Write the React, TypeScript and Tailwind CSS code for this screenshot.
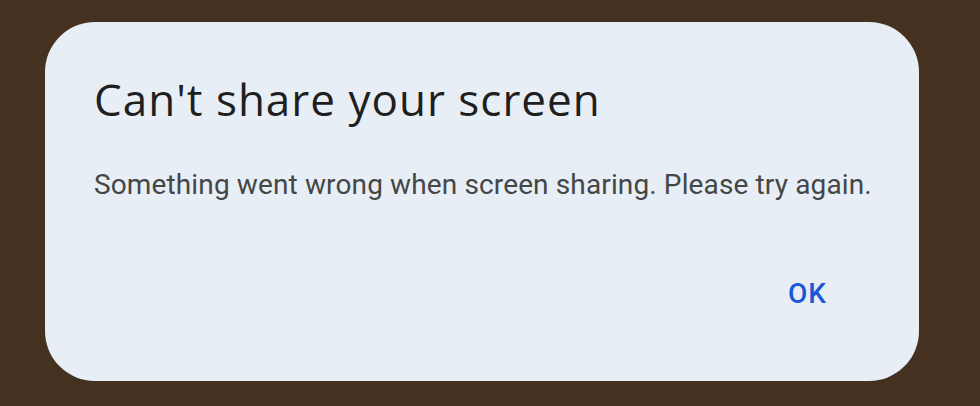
export default function App() {
  return (
    <div className="w-[980px] h-[406px] bg-[#45311f] pt-[22px] pl-[45px] font-['Roboto',sans-serif]">
      <div className="w-[874px] h-[359px] bg-[#e8eef6] rounded-[50px] pl-[49px] pr-[40px] pt-[51px] flex flex-col">
        <h1 className="font-['Open_Sans',sans-serif] text-[44px] leading-[52px] text-[#1f1f1f] tracking-[1px]">
          Can't share your screen
        </h1>
        <p className="mt-[42px] text-[28px] leading-[36px] text-[#444746] tracking-[0.13px] whitespace-nowrap">
          Something went wrong when screen sharing. Please try again.
        </p>
        <div className="flex justify-end mt-[73px] pr-[52px]">
          <button className="text-[28px] leading-[36px] font-medium text-[#1a56d6] tracking-[1px]">OK</button>
        </div>
      </div>
    </div>
  );
}
